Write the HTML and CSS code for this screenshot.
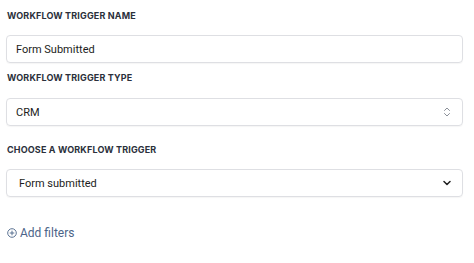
FILE: index.html
```html
<!DOCTYPE html>
<html>
<head>
<meta charset="utf-8">
<link rel="stylesheet" href="styles.css">
</head>
<body>
<div class="form">
  <div class="label l1">WORKFLOW TRIGGER NAME</div>
  <div class="field f1"><span class="value">Form Submitted</span></div>
  <div class="label l2">WORKFLOW TRIGGER TYPE</div>
  <div class="field f2">
    <span class="value">CRM</span>
    <svg class="updown" width="8" height="12" viewBox="0 0 8 12"><path d="M1.5 4.5 L4 2 L6.5 4.5 M1.5 7.5 L4 10 L6.5 7.5" fill="none" stroke="#8a8f98" stroke-width="1" stroke-linecap="round" stroke-linejoin="round"/></svg>
  </div>
  <div class="label l3">CHOOSE A WORKFLOW TRIGGER</div>
  <div class="field f3">
    <span class="value v3">Form submitted</span>
    <svg class="chev" width="8" height="6" viewBox="0 0 8 6"><path d="M1 1.5 L4 4.5 L7 1.5" fill="none" stroke="#222" stroke-width="1.5" stroke-linecap="round" stroke-linejoin="round"/></svg>
  </div>
  <div class="add">
    <svg class="plus" width="10" height="10" viewBox="0 0 10 10"><circle cx="5" cy="5" r="4.3" fill="none" stroke="#4b6488" stroke-width="0.9"/><path d="M5 2.7 V7.3 M2.7 5 H7.3" stroke="#4b6488" stroke-width="0.9"/></svg>
    <span>Add filters</span>
  </div>
</div>
</body>
</html>
```
FILE: styles.css
```css
html, body {
  margin: 0;
  padding: 0;
  background: #ffffff;
}
.form {
  display: flex;
  flex-direction: column;
  padding: 0 11px 0 6px;
  font-family: "Inter", "Liberation Sans", sans-serif;
}
.label {
  height: 12px;
  line-height: 12px;
  font-size: 9px;
  font-weight: 700;
  letter-spacing: 0.15px;
  color: #2b303b;
  padding-left: 1px;
}
.l1 { margin-top: 10px; }
.l2 { margin-top: 9px; }
.l3 { margin-top: 18px; }
.field {
  box-sizing: border-box;
  height: 28px;
  border: 1px solid #dedfe3;
  border-radius: 4px;
  box-shadow: 0 1px 1px rgba(0,0,0,0.04);
  display: flex;
  align-items: center;
  justify-content: space-between;
  padding: 0 11px 0 9px;
}
.f1 { margin-top: 13px; }
.f2 { margin-top: 14px; }
.f3 { margin-top: 13px; padding-left: 12px; }
.value {
  font-family: "Roboto", "Liberation Sans", sans-serif;
  font-size: 11px;
  color: #1c1d21;
}
.add {
  margin-top: 28px;
  height: 16px;
  display: flex;
  align-items: center;
  gap: 3px;
  padding-left: 1px;
  color: #4b6488;
  font-size: 12px;
  font-family: "Roboto", "Liberation Sans", sans-serif;
}
```
